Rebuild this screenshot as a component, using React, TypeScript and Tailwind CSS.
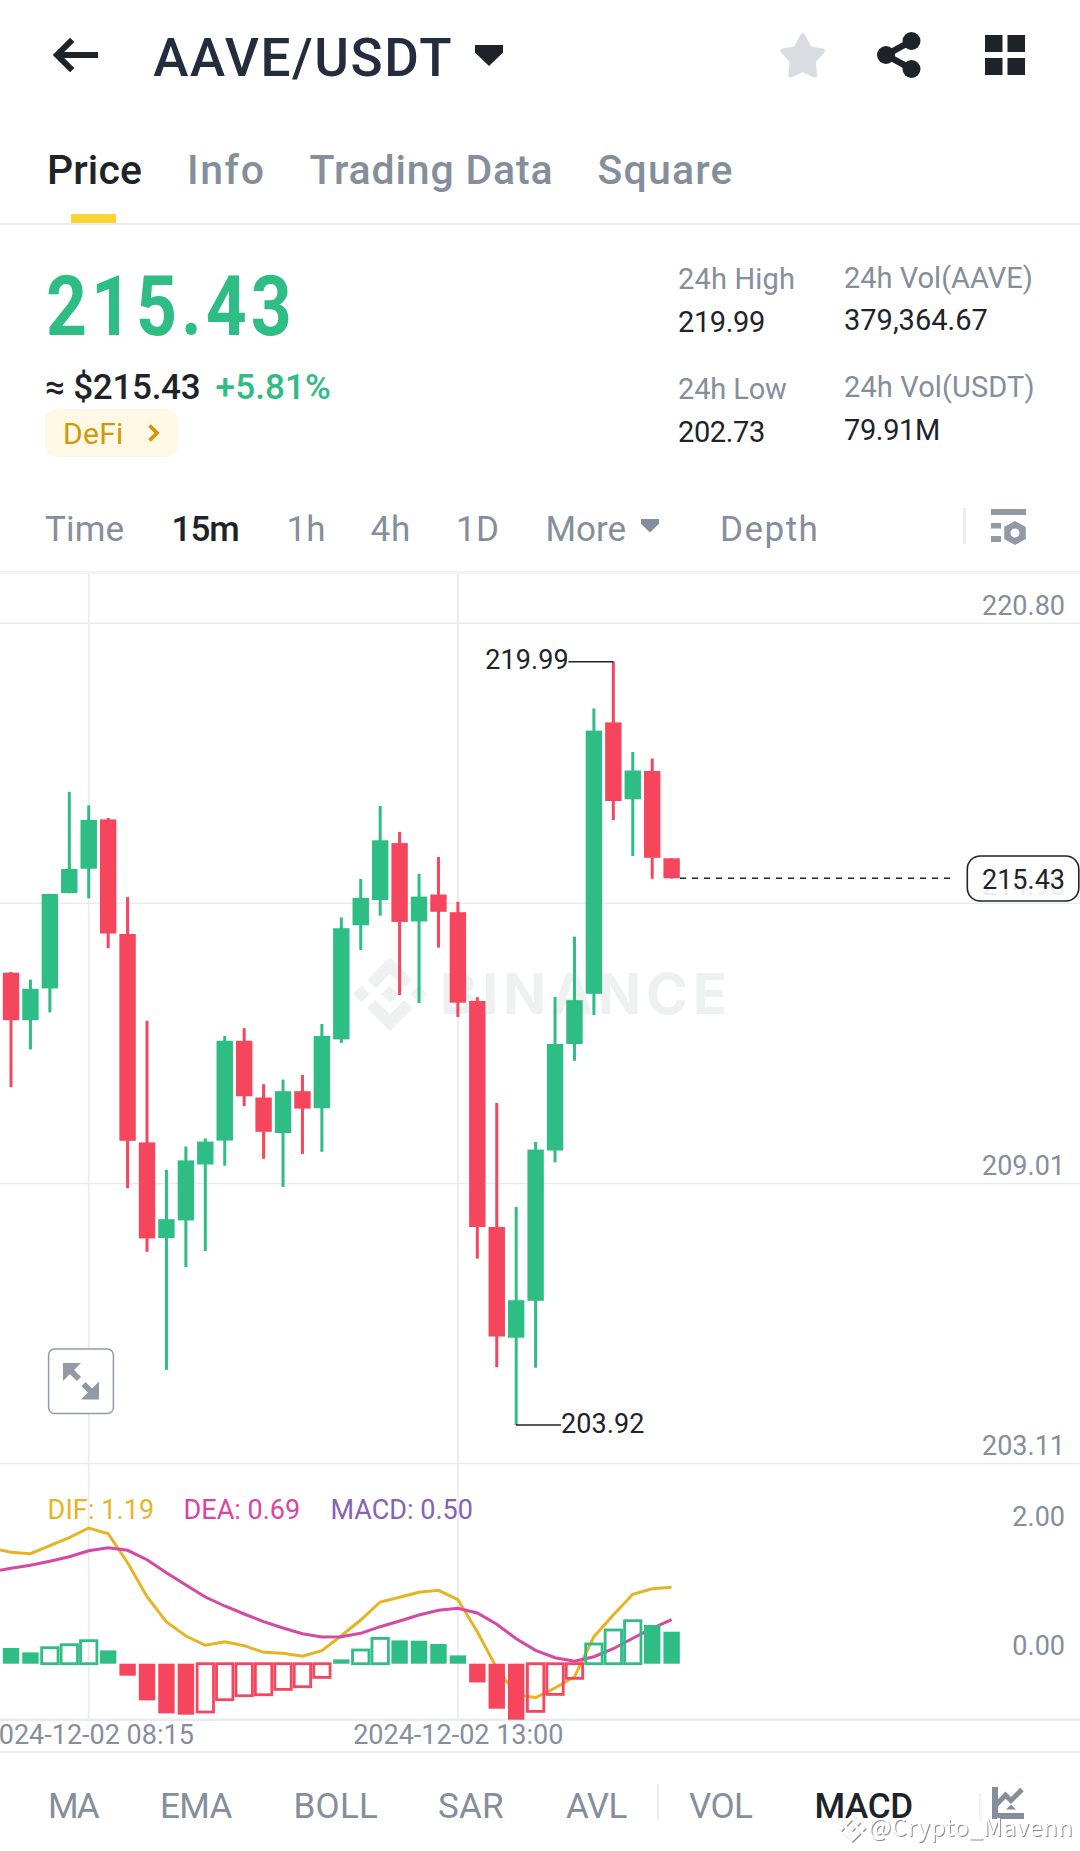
import { SiBinance } from "react-icons/si";

const UP = "#2ebd85";
const DOWN = "#f6465d";
const STEP = 19.43;
const ZERO = 1663.7;

const cx = (i: number) => 11 + i * STEP;

// [direction, body top, body bottom, high, low]
const candles: [number, number, number, number, number][] = [
  [-1, 972.7, 1020.2, 972, 1087],
  [1, 988.8, 1020.2, 979.6, 1049.4],
  [1, 893.9, 988.4, 893.9, 1012.4],
  [1, 869, 893.1, 791.8, 893.3],
  [1, 820, 868.7, 805.3, 898.4],
  [-1, 819.4, 933.5, 818, 948.2],
  [-1, 934, 1140.8, 897.1, 1188.2],
  [-1, 1142.4, 1238.4, 1020.8, 1251.8],
  [1, 1219.2, 1238, 1169.8, 1369.8],
  [1, 1160.4, 1220.4, 1146.5, 1267],
  [1, 1141.6, 1164.5, 1138.4, 1251],
  [1, 1040.8, 1140.6, 1036, 1165.7],
  [-1, 1040.8, 1096.3, 1028.2, 1106],
  [-1, 1097.5, 1131.8, 1084.2, 1158.8],
  [1, 1091.2, 1133, 1079.6, 1187],
  [-1, 1091.2, 1108.6, 1075, 1153.9],
  [1, 1036, 1108.2, 1024, 1151.8],
  [1, 928.2, 1039.4, 917.5, 1042.9],
  [1, 897.9, 925.3, 879, 950],
  [1, 840.3, 900, 806, 915.7],
  [-1, 843.1, 921.9, 831.9, 995],
  [1, 896.6, 921.5, 873.9, 1003],
  [-1, 894.5, 911.8, 857, 947.6],
  [-1, 912.2, 1002.7, 901.8, 1017],
  [-1, 1001, 1227, 997.2, 1258.6],
  [-1, 1227, 1336.5, 1102.9, 1367.2],
  [1, 1300.2, 1337.7, 1207, 1425],
  [1, 1149.6, 1300.8, 1142, 1367.7],
  [1, 1044, 1150.5, 997, 1162.3],
  [1, 1000.2, 1044, 936.6, 1060.8],
  [1, 730.6, 993.8, 708.5, 1015],
  [-1, 722.4, 801, 661.7, 820],
  [1, 770.5, 799.3, 752, 856],
  [-1, 771, 857.8, 758.5, 878.8],
  [-1, 858.3, 878.3, 858.3, 878.5],
];

// [height, outlined]
const macd: [number, boolean][] = [
  [15.7, false], [11.3, false], [16, true], [19, true], [23, true],
  [13.3, false], [-12, false], [-36.7, false], [-49.7, false], [-51, false],
  [-48.3, true], [-36, true], [-32, true], [-31, true], [-25.7, true],
  [-23, true], [-13.7, true], [4.3, false], [13.7, true], [25.3, true],
  [23.3, false], [23, false], [19.7, false], [8.3, false], [-18.7, false],
  [-45, false], [-56, false], [-47.7, true], [-30.7, true], [-14.7, true],
  [19.7, true], [33.7, true], [43, true], [38.7, false], [32, false],
];

const dif = [
  1552.3, 1553.7, 1545.7, 1537.7, 1528, 1533.7, 1562.7, 1596.7, 1622, 1636,
  1645.3, 1641.7, 1645.7, 1652.3, 1653.3, 1656.3, 1650.7, 1635.7, 1620, 1602,
  1597.3, 1592.3, 1590.3, 1599.7, 1631.7, 1668.3, 1694.3, 1697.7, 1688, 1676.7,
  1636.7, 1615, 1594.3, 1588.7, 1587.3,
];

const dea = [
  1568.3, 1565.3, 1561.3, 1556.7, 1550.7, 1547.7, 1550.3, 1559.7, 1572.7, 1585,
  1597, 1606, 1614, 1621.7, 1628, 1633.7, 1637, 1636.7, 1633.3, 1626.7,
  1621, 1615, 1610.3, 1608.3, 1613, 1624.3, 1638.7, 1650.3, 1657.7, 1661.3,
  1656.7, 1648.7, 1638.3, 1628.3, 1619.7,
];

const points = (first: number, ys: number[]) =>
  [`0,${first}`, ...ys.map((y, i) => `${cx(i).toFixed(1)},${y}`)].join(" ");

const tabs = [
  { label: "Price", className: "text-[#1e2329] tracking-[0.1px]", active: true },
  { label: "Info", className: "tracking-[1.6px] pl-px" },
  { label: "Trading Data", className: "tracking-[0.84px]" },
  { label: "Square", className: "tracking-[1.19px]" },
];

const intervals = [
  { label: "Time", className: "w-[126.6px] tracking-[0.14px]" },
  { label: "15m", className: "w-[115px] font-medium tracking-[-1.1px] text-[#1e2329]" },
  { label: "1h", className: "w-[84px]" },
  { label: "4h", className: "w-[85.5px] tracking-[0.8px]" },
  { label: "1D", className: "w-[89.4px] tracking-[0.3px]" },
];

const indicators = [
  { label: "MA", className: "w-[112px] tracking-[-2px]" },
  { label: "EMA", className: "w-[133.5px] tracking-[-0.6px]" },
  { label: "BOLL", className: "w-[144.5px] tracking-[0.25px]" },
  { label: "SAR", className: "w-[128px] tracking-[0.19px]" },
  { label: "AVL", className: "w-[91px] tracking-[-0.6px]" },
];

const Caret = (props: { className: string }) => (
  <svg viewBox="0 0 28 21" className={props.className} fill="currentColor">
    <path d="M0 0h28v7.5L14 21 0 7.5z" />
  </svg>
);

const Stat = (props: { label: string; value: string; className: string; labelClass?: string; valueClass?: string }) => (
  <div className={props.className}>
    <div className={`text-[#848e9c] ${props.labelClass ?? ""}`}>{props.label}</div>
    <div className={`text-[#1e2329] ${props.valueClass ?? ""}`}>{props.value}</div>
  </div>
);

const Header = () => (
  <header className="flex h-[110px] items-center pl-[52px] pr-[55px] text-[#1e2329]">
    <svg width="46" height="36" viewBox="0 0 46 36" fill="none" stroke="currentColor" strokeWidth="6">
      <path d="M20.2 2.8 5 18l15.2 15.2M5 18h41" />
    </svg>
    <h1 className="ml-[55.3px] w-[299px] whitespace-nowrap pt-1.5 text-[53px] font-medium leading-[60px] tracking-[1.6px] text-[#242d3d]">
      AAVE/USDT
    </h1>
    <Caret className="ml-[23px] h-[21px] w-7" />
    <svg width="46" height="46" viewBox="0 0 46 46" className="ml-auto text-[#d9dce1]" fill="currentColor" stroke="currentColor" strokeWidth="5" strokeLinejoin="round">
      <path d="M22.7 3.8 29.4 16.7 42.4 19 33.2 28.8 34.7 43 22.7 37.4 10.7 43 12.2 28.8 3 19 16 16.7z" />
    </svg>
    <svg width="44" height="48" viewBox="0 0 44 48" className="ml-[51px]" fill="currentColor">
      <path d="M34.5 10 9 24l25.5 14" fill="none" stroke="currentColor" strokeWidth="6.5" />
      <circle cx="9" cy="24" r="9" />
      <circle cx="34.5" cy="10" r="9" />
      <circle cx="34.5" cy="38" r="9" />
    </svg>
    <svg width="40" height="40" viewBox="0 0 40 40" className="ml-16" fill="currentColor">
      <path d="M0 0h17.5v17H0zM22.5 0H40v17H22.5zM0 23h17.5v17H0zM22.5 23H40v17H22.5z" />
    </svg>
  </header>
);

const Chart = () => (
  <svg width="1080" height="1177" viewBox="0 574 1080 1177" className="block" fontFamily="Roboto, sans-serif" fontSize="27">
    <g stroke="#e9ebed" strokeWidth="1.5">
      <path d="M0 623.3H1080M0 903.3H1080M0 1183.5H1080M0 1463.5H1080" />
      <path d="M88.7 574V1719M458 574V1719" strokeWidth="1.8" />
      <path d="M0 1719.7H1080" strokeWidth="2.5" />
    </g>

    <g fill="#eef1f0" color="#eef1f0">
      <SiBinance x="353" y="957" size={74} />
      <text x="440" y="1014" fontFamily="Inter, sans-serif" fontWeight="700" fontSize="56.5" textLength="287">
        BINANCE
      </text>
    </g>

    {candles.map(([dir, top, bottom, high, low], i) => (
      <g key={i} fill={dir > 0 ? UP : DOWN}>
        <rect x={cx(i) - 1.5} y={high} width="3" height={low - high} />
        <rect x={cx(i) - 8.2} y={top} width="16.4" height={bottom - top} />
      </g>
    ))}

    <g stroke="#1e2329" strokeWidth="1.5">
      <path d="M568.5 661.7H613.5M516 1425H561" />
      <path d="M680 878.3H951" strokeDasharray="6 6" />
    </g>
    <g fill="#1e2329">
      <text x="485.3" y="669" letterSpacing="0.1">219.99</text>
      <text x="561" y="1432.5" letterSpacing="0.1">203.92</text>
    </g>

    <g fill="#848e9c" textAnchor="end">
      <text x="1065" y="614.7">220.80</text>
      <text x="1065" y="1174.5">209.01</text>
      <text x="1065" y="1454.7">203.11</text>
      <text x="1065" y="1526">2.00</text>
      <text x="1065" y="1655">0.00</text>
    </g>
    {/* axis label showing through the price tag */}
    <text x="1065" y="895" fill="#e3e6e9" textAnchor="end">214.90</text>
    <rect x="967.3" y="856" width="111.5" height="45" rx="13" fill="#fff" fillOpacity="0.3" stroke="#1e2329" strokeWidth="1.6" />
    <text x="1065" y="889" fill="#1e2329" textAnchor="end">215.43</text>

    <rect x="48.6" y="1349" width="64.8" height="64.5" rx="6" fill="#fff" stroke="#929aa5" strokeWidth="1.5" />
    <g fill="#929aa5" stroke="#929aa5">
      <path d="M63 1363h18l-18 18zM99 1399.5h-18l18-18z" stroke="none" />
      <path d="M68 1368 79 1379M94 1394.5 83.5 1384" strokeWidth="6" />
    </g>

    <text x="47.6" y="1519.3" fill="#e6b422" letterSpacing="0.1">DIF: 1.19</text>
    <text x="183.6" y="1519.3" fill="#d944a5">DEA: 0.69</text>
    <text x="330.5" y="1519.3" fill="#8662b3">MACD: 0.50</text>

    <g fill="none" strokeWidth="3">
      <polyline points={points(1550, dif)} stroke="#e6b422" />
      <polyline points={points(1570.3, dea)} stroke="#d548a4" />
    </g>
    {macd.map(([h, outlined], i) => {
      const color = h > 0 ? UP : DOWN;
      return (
        <rect
          key={i}
          x={cx(i) - 8.2}
          y={h > 0 ? ZERO - h : ZERO}
          width="16.4"
          height={Math.abs(h)}
          fill={outlined ? "none" : color}
          stroke={outlined ? color : "none"}
          strokeWidth="2.8"
        />
      );
    })}

    <g fill="#848e9c" textAnchor="middle">
      <text x="88.7" y="1744">2024-12-02 08:15</text>
      <text x="458.3" y="1744">2024-12-02 13:00</text>
    </g>
  </svg>
);

export default function App() {
  return (
    <div className="relative h-[1851px] w-[1080px] overflow-hidden bg-white font-[Roboto,sans-serif]">
      <Header />

      <nav className="flex h-[115px] gap-11 border-b-2 border-[#eaebec] pl-[47px] text-[41px] font-medium leading-[120px] text-[#848e9c]">
        {tabs.map((tab) => (
          <div key={tab.label} className={`relative h-[113px] whitespace-nowrap ${tab.className}`}>
            {tab.label}
            {tab.active && <span className="absolute bottom-0 left-6 h-[9px] w-[45px] bg-[#fcd535]" />}
          </div>
        ))}
      </nav>

      <section className="flex h-[262px]">
        <div className="w-[678px] pl-[45px] pt-[42px]">
          <div className="ml-px h-20 w-[300px] origin-left scale-x-[0.86] text-[83px] font-bold leading-[80px] tracking-[4.7px] text-[#2ebd85]">
            215.43
          </div>
          <div className="mt-[19px] flex h-[43px] items-center whitespace-nowrap text-[35px] font-medium leading-[43px]">
            <span className="w-[170.6px] tracking-[-0.27px] text-[#1e2329]">≈ $215.43</span>
            <span className="tracking-[0.11px] text-[#2ebd85]">+5.81%</span>
          </div>
          <div className="flex h-12 w-[133px] items-center rounded-xl bg-[#fef8e5] pl-[18px] text-[30px] tracking-[0.27px] text-[#d0980b]">
            DeFi
            <svg width="12" height="18" viewBox="0 0 12 18" className="ml-6" fill="none" stroke="currentColor" strokeWidth="3.8">
              <path d="M1.5 1.5 9 9l-7.5 7.5" />
            </svg>
          </div>
        </div>
        <div className="w-[166px] whitespace-nowrap pt-[32.5px] text-[29px] leading-[43px]">
          <Stat label="24h High" value="219.99" className="mb-6" labelClass="tracking-[0.17px]" valueClass="tracking-[-0.37px]" />
          <Stat label="24h Low" value="202.73" className="" labelClass="tracking-[-0.15px]" valueClass="tracking-[-0.37px]" />
        </div>
        <div className="whitespace-nowrap pt-8 text-[29px] leading-[42px]">
          <Stat label="24h Vol(AAVE)" value="379,364.67" className="mb-[25px]" />
          <Stat label="24h Vol(USDT)" value="79.91M" className="" labelClass="tracking-[0.12px]" valueClass="tracking-[-0.37px] pt-px" />
        </div>
      </section>

      <div className="flex h-[87px] items-center border-b-[3px] border-[#f2f4f4] pl-[45px] pr-[54px] pt-0.5 text-[35px] leading-[44px] text-[#848e9c]">
        {intervals.map((item) => (
          <div key={item.label} className={item.className}>
            {item.label}
          </div>
        ))}
        <div className="flex w-[174.5px] items-center">
          More
          <Caret className="mb-2 ml-[15px] h-[13.5px] w-[18px]" />
        </div>
        <div className="tracking-[1.5px]">Depth</div>
        <div className="mb-2 ml-auto h-9 w-[3px] bg-[#ebedef]" />
        <svg width="35" height="36" viewBox="0 0 35 36" className="mb-1.5 ml-[25px] text-[#929aa5]" fill="currentColor">
          <path d="M0 0h35v6H0zM0 14h10v5.5H0zM0 27h10v6H0z" />
          <path d="M24 12l10.8 6v12L24 36l-10.8-6V18zM24 19.500a4.5 4.5 0 1 0 0 9 4.5 4.5 0 1 0 0-9z" fillRule="evenodd" />
        </svg>
      </div>

      <Chart />

      <div className="flex h-[100px] items-center border-t-2 border-[#eaebec] pl-12 pt-2.5 text-[35px] leading-[44px] text-[#848e9c]">
        {indicators.map((item) => (
          <div key={item.label} className={item.className}>
            {item.label}
          </div>
        ))}
        <div className="mb-2.5 h-9 w-0.5 bg-[#eaebec]" />
        <div className="ml-[30px] w-[125.5px] tracking-[-0.57px]">VOL</div>
        <div className="w-[164px] font-medium tracking-[-0.3px] text-[#1e2329]">MACD</div>
        <div className="h-7 w-[3px] bg-[#f4f5f6]" />
        <svg width="32" height="32" viewBox="0 0 32 32" className="mb-2 ml-[10.5px]" fill="currentColor">
          <path d="M0 0h6v26h26v6H0z" />
          <path d="M4 18l9.5-10 5.5 5.5L30 2.5" fill="none" stroke="currentColor" strokeWidth="5" />
          <path d="M19 17.5l5 5H14z" />
        </svg>
      </div>

      <div className="absolute bottom-[9px] right-[7px] flex items-center whitespace-nowrap font-['Noto_Sans_CJK_SC',sans-serif] text-[24px] leading-[32px] tracking-[0.35px] text-white [filter:drop-shadow(1px_1px_0.5px_#8d8d8d)]">
        <SiBinance size={28} className="mr-[3px] mt-1" />
        @Crypto_Mavenn
      </div>
    </div>
  );
}
